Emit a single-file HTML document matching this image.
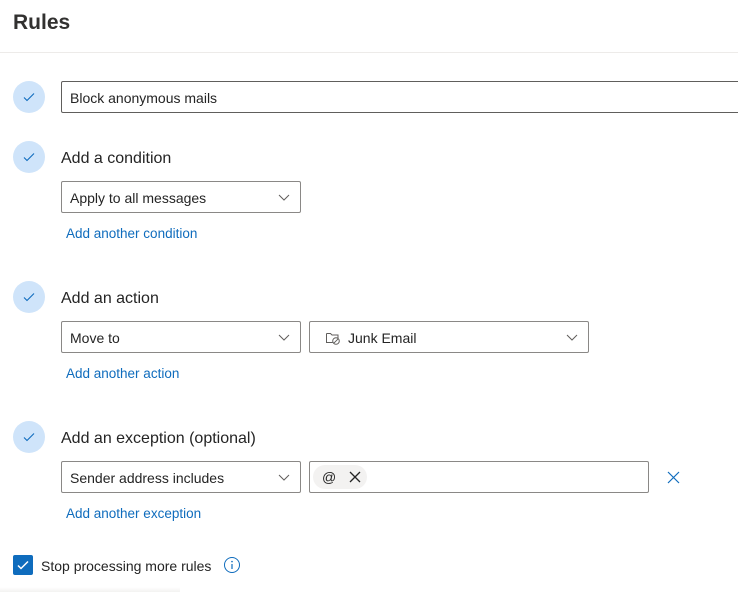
<!DOCTYPE html>
<html><head><style>
body{margin:0;width:738px;height:592px;background:#fff;font-family:"Liberation Sans",sans-serif;color:#242424;position:relative;overflow:hidden}
.a{position:absolute}
.c{position:absolute;left:13px;width:32px;height:32px;border-radius:50%;background:#cfe4fa}
.c svg{position:absolute;left:9px;top:9px}
.box{position:absolute;height:30px;border:1px solid #8a8886;border-radius:2px;box-sizing:content-box;font-size:14px;line-height:32px;background:#fff}
.h{position:absolute;left:61px;font-size:16px}
.l{position:absolute;left:66px;font-size:13.5px;color:#0f6cbd}
.chev{position:absolute;right:10px;top:10px}
</style></head><body>
<div class="a" style="left:13px;top:11px;font-size:21px;font-weight:bold;color:#323130">Rules</div>
<div class="a" style="left:0;top:52px;width:738px;height:1px;background:#edebe9"></div>

<div class="c" style="top:81px"><svg width="14" height="14" viewBox="0 0 14 14"><path d="M2 7.5l3 3 7-7" fill="none" stroke="#0f6cbd" stroke-width="1.1"/></svg></div>
<div class="box" style="left:61px;top:81px;width:700px;border-color:#605e5c"><span style="margin-left:8px">Block anonymous mails</span></div>

<div class="c" style="top:141px"><svg width="14" height="14" viewBox="0 0 14 14"><path d="M2 7.5l3 3 7-7" fill="none" stroke="#0f6cbd" stroke-width="1.1"/></svg></div>
<div class="h" style="top:150px">Add a condition</div>
<div class="box" style="left:61px;top:181px;width:238px"><span style="margin-left:8px">Apply to all messages</span><svg class="chev" width="12" height="10" viewBox="0 0 12 10"><path d="M1 3l5 5 5-5" fill="none" stroke="#605e5c"/></svg></div>
<div class="l" style="top:226px">Add another condition</div>

<div class="c" style="top:281px"><svg width="14" height="14" viewBox="0 0 14 14"><path d="M2 7.5l3 3 7-7" fill="none" stroke="#0f6cbd" stroke-width="1.1"/></svg></div>
<div class="h" style="top:290px">Add an action</div>
<div class="box" style="left:61px;top:321px;width:238px"><span style="margin-left:8px">Move to</span><svg class="chev" width="12" height="10" viewBox="0 0 12 10"><path d="M1 3l5 5 5-5" fill="none" stroke="#605e5c"/></svg></div>
<div class="box" style="left:309px;top:321px;width:278px"><svg class="a" style="left:15px;top:8px" width="16" height="16" viewBox="0 0 16 16"><path d="M1.5 3.5h4l1.5 1.5h6v3M1.5 3.5v9h6" fill="none" stroke="#605e5c"/><circle cx="11" cy="11" r="3.3" fill="none" stroke="#605e5c"/><path d="M8.8 13.2l4.4-4.4" stroke="#605e5c"/></svg><span style="margin-left:38px">Junk Email</span><svg class="chev" width="12" height="10" viewBox="0 0 12 10"><path d="M1 3l5 5 5-5" fill="none" stroke="#605e5c"/></svg></div>
<div class="l" style="top:366px">Add another action</div>

<div class="c" style="top:421px"><svg width="14" height="14" viewBox="0 0 14 14"><path d="M2 7.5l3 3 7-7" fill="none" stroke="#0f6cbd" stroke-width="1.1"/></svg></div>
<div class="h" style="top:430px">Add an exception (optional)</div>
<div class="box" style="left:61px;top:461px;width:238px"><span style="margin-left:8px">Sender address includes</span><svg class="chev" width="12" height="10" viewBox="0 0 12 10"><path d="M1 3l5 5 5-5" fill="none" stroke="#605e5c"/></svg></div>
<div class="box" style="left:309px;top:461px;width:338px"><div class="a" style="left:3px;top:3px;width:54px;height:24px;border-radius:12px;background:#f3f2f1;line-height:24px;font-size:14px"><span style="margin-left:9px">@</span><svg class="a" style="left:36px;top:6px" width="12" height="12" viewBox="0 0 12 12"><path d="M1 1l10 10M11 1L1 11" stroke="#242424" stroke-width="1.3"/></svg></div></div>
<svg class="a" style="left:667px;top:471px" width="13" height="13" viewBox="0 0 13 13"><path d="M1 1l11 11M12 1L1 12" stroke="#0f6cbd" stroke-width="1.2"/></svg>
<div class="l" style="top:506px">Add another exception</div>

<div class="a" style="left:13px;top:555px;width:20px;height:20px;border-radius:2px;background:#0f6cbd"><svg class="a" style="left:3px;top:3px" width="14" height="14" viewBox="0 0 14 14"><path d="M2 7.5l3 3 7-7" fill="none" stroke="#fff" stroke-width="1.5"/></svg></div>
<div class="a" style="left:41px;top:558px;font-size:14px">Stop processing more rules</div>
<svg class="a" style="left:223px;top:556px" width="18" height="18" viewBox="0 0 18 18"><circle cx="9" cy="9" r="7.5" fill="none" stroke="#0f6cbd"/><path d="M9 8v5" stroke="#0f6cbd" stroke-width="1.2"/><circle cx="9" cy="5.6" r="0.8" fill="#0f6cbd"/></svg>
<div class="a" style="left:0;top:587px;width:180px;height:5px;background:linear-gradient(#fff,#f3f2f1)"></div>
</body></html>
